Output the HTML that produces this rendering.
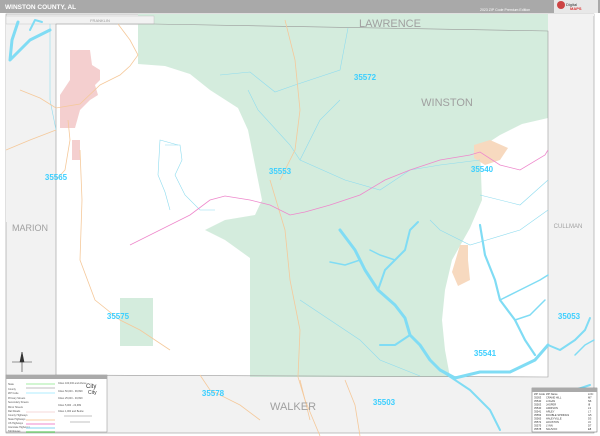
<!DOCTYPE html>
<html><head><meta charset="utf-8"><style>
html,body{margin:0;padding:0;width:600px;height:436px;overflow:hidden;background:#fff;font-family:"Liberation Sans",sans-serif}
</style></head><body>
<svg width="600" height="436" viewBox="0 0 600 436" xmlns="http://www.w3.org/2000/svg" font-family="Liberation Sans, sans-serif">
<rect x="0" y="0" width="600" height="436" fill="#fff"/>
<rect x="0" y="0" width="600" height="13" fill="#a9a9a9"/>
<text x="5" y="9" font-size="6.5" font-weight="bold" fill="#fff">WINSTON COUNTY, AL</text>
<text x="480" y="11" font-size="3.5" fill="#fff">2023 ZIP Code Premium Edition</text>
<rect x="554" y="0" width="44" height="13" fill="#e8e8e8"/>
<circle cx="561" cy="5" r="4" fill="#c44"/><text x="566" y="6" font-size="4" fill="#333">Digital</text><text x="570" y="10" font-size="4" fill="#d33" font-weight="bold">MAPS</text>
<!-- frame -->
<rect x="6" y="14" width="588" height="419" fill="#f2f2f2" stroke="#999" stroke-width="0.6"/>
<!-- county interior white -->
<polygon points="56,24 548,31 548,377 56,375" fill="#fff"/>
<!-- top-left white area -->
<rect x="6" y="22" width="50" height="200" fill="#f2f2f2"/>
<!-- green -->
<polygon points="138,14 594,14 594,16 548,16 548,118 522,124 500,135 480,148 482,200 470,228 452,260 445,290 442,320 445,350 450,377 250,377 250,258 225,240 205,230 225,220 255,215 262,200 256,170 248,130 238,108 210,90 190,74 165,66 138,64" fill="#d4ecdd"/>
<polygon points="548,16 594,16 594,14 548,14" fill="#f2f2f2"/>
<!-- Franklin strip -->
<rect x="6" y="16" width="148" height="8" fill="#f2f2f2" stroke="#bbb" stroke-width="0.4"/>
<text x="100" y="22" font-size="4" fill="#999" text-anchor="middle">FRANKLIN</text>
<!-- county boundary lines -->
<polyline points="154,24 548,31 548,377 56,375 56,24 154,24" fill="none" stroke="#999" stroke-width="0.6"/>
<!-- box in 35575 -->
<rect x="120" y="298" width="33" height="48" fill="#d4ecdd"/>
<!-- cities -->
<path d="M70,50 L90,50 L92,65 L100,70 L100,80 L95,85 L98,95 L90,100 L80,110 L75,128 L60,128 L60,95 L70,80 Z" fill="#f4cfcf"/>
<path d="M72,140 L80,140 L80,160 L72,160 Z" fill="#f4cfcf"/>
<path d="M474,145 L490,140 L508,148 L500,160 L485,165 L474,158 Z" fill="#f7d9bf"/>
<path d="M460,245 L468,245 L468,260 L470,280 L458,286 L452,272 L455,262 Z" fill="#f7d9bf"/>
<!-- zip boundaries -->
<g fill="none" stroke="#8fdcef" stroke-width="0.6">
<polyline points="220,75 250,72 275,92 295,85 340,70 348,28"/>
<polyline points="248,90 258,110 290,145 300,160 345,180 380,190 410,170 440,165 480,160"/>
<polyline points="300,160 320,120 340,100"/>
<polyline points="165,145 180,145 182,160 175,175 185,195 200,210 215,210"/>
<polyline points="178,145 160,140 158,175 165,192 170,210"/>
<polyline points="430,220 440,230 470,245 520,230 548,210"/>
<polyline points="300,300 330,320 360,340 380,360 420,376"/>
<polyline points="480,195 520,205 548,180"/>
<polyline points="50,24 50,100 56,130"/>
</g>
<!-- roads -->
<g fill="none" stroke-width="0.8">
<polyline points="20,90 40,98 56,108 80,104 100,85 120,75 130,66 138,55 130,40 118,24" stroke="#f5c99b"/>
<polyline points="56,180 65,170 70,140 68,120" stroke="#f5c99b"/>
<polyline points="6,150 30,140 56,130" stroke="#f5c99b"/>
<polyline points="80,150 82,200 80,260 95,300 120,320 140,330 170,350" stroke="#f5c99b"/>
<polyline points="270,180 285,230 290,280 300,330 298,377 305,400 320,436" stroke="#f5c99b"/>
<polyline points="285,20 295,60 300,110 295,150 280,180" stroke="#f5c99b"/>
<polyline points="200,375 210,390 240,405 260,420" stroke="#f5c99b"/>
<polyline points="345,380 355,405 360,436" stroke="#f5c99b"/>
<polyline points="300,380 310,420" stroke="#f5c99b"/>
<polyline points="130,245 160,230 190,215 210,200 225,196 250,200 270,205 290,215 305,212 330,205 360,195 385,180 410,170 440,160 470,155 480,152 500,165 520,170 545,155 548,150" stroke="#ee88cc"/>
</g>
<!-- lakes -->
<g fill="none" stroke="#80dcf4" stroke-linecap="round" stroke-linejoin="round">
<polyline points="18,22 12,40 10,60 20,50 30,40 40,35 50,30" stroke-width="3"/>
<polyline points="30,30 35,20 42,22" stroke-width="2"/>
<polyline points="340,230 355,250 365,270 378,290 395,305 405,318 410,335 420,345 430,360 440,370 455,378 480,372 510,372 535,360 548,345" stroke-width="3"/>
<polyline points="378,290 385,270 395,260 405,250 410,230 418,222" stroke-width="2"/>
<polyline points="395,260 380,255 370,250" stroke-width="1.5"/>
<polyline points="360,260 345,265 330,262" stroke-width="1.5"/>
<polyline points="410,335 395,345 380,345" stroke-width="2"/>
<polyline points="480,225 485,255 495,280 500,300 515,320 525,340 535,355" stroke-width="2.2"/>
<polyline points="500,300 520,290 540,280 548,275" stroke-width="1.5"/>
<polyline points="515,320 530,315 545,300" stroke-width="1.5"/>
<polyline points="548,345 560,350 575,340 585,330 590,318" stroke-width="2"/>
<polyline points="440,370 470,390 490,410 500,430" stroke-width="2"/>
<polyline points="560,400 575,390 590,385" stroke-width="2"/>
<polyline points="575,355 585,345 594,340" stroke-width="1.5"/>
</g>
<!-- labels -->
<g font-size="11" fill="#a0a0a0" text-anchor="middle">
<text x="390" y="27">LAWRENCE</text>
<text x="447" y="106">WINSTON</text>
<text x="30" y="231" font-size="9">MARION</text>
<text x="293" y="410">WALKER</text>
<text x="568" y="228" font-size="6">CULLMAN</text>
</g>
<g font-size="8" fill="#3ccfff" font-weight="bold" text-anchor="middle">
<text x="365" y="80">35572</text>
<text x="280" y="174">35553</text>
<text x="482" y="172">35540</text>
<text x="56" y="180">35565</text>
<text x="118" y="319">35575</text>
<text x="485" y="356">35541</text>
<text x="569" y="319">35053</text>
<text x="213" y="396">35578</text>
<text x="384" y="405">35503</text>
</g>
<!-- compass -->
<g stroke="#333" stroke-width="0.6" fill="#333"><line x1="22" y1="352" x2="22" y2="372"/><line x1="12" y1="362" x2="32" y2="362"/><polygon points="22,352 20,362 24,362"/></g>
<!-- legend -->
<rect x="6" y="375" width="101" height="57" fill="#fff" stroke="#888" stroke-width="0.5"/>
<rect x="6" y="375" width="101" height="4" fill="#aaa"/>
<g font-size="2.5" fill="#555">
<text x="8" y="385">State</text><text x="8" y="390">County</text><text x="8" y="394">ZIP Code</text><text x="8" y="399">Primary Streets</text><text x="8" y="403">Secondary Streets</text><text x="8" y="408">Minor Streets</text><text x="8" y="412">Rail Roads</text><text x="8" y="416">County Highways</text><text x="8" y="420">State Highways</text><text x="8" y="424">US Highways</text><text x="8" y="428">Interstate Highways</text><text x="8" y="432">Toll Routes</text>
<text x="58" y="384">Cities 100,000 and Above</text><text x="58" y="392">Cities 50,000 - 99,999</text><text x="58" y="399">Cities 25,000 - 49,999</text><text x="58" y="406">Cities 5,000 - 24,999</text><text x="58" y="412">Cities 1,000 and Below</text>
</g>
<text x="86" y="388" font-size="6" fill="#333">City</text><text x="88" y="394" font-size="5" fill="#333">City</text>
<g stroke-width="1.2"><line x1="26" y1="384" x2="55" y2="384" stroke="#b6f0b6"/><line x1="26" y1="388" x2="55" y2="388" stroke="#ccc"/><line x1="26" y1="393" x2="55" y2="393" stroke="#bff0ff"/><line x1="26" y1="412" x2="55" y2="412" stroke="#f6e0e0"/><line x1="26" y1="420" x2="55" y2="420" stroke="#fad8b5"/><line x1="26" y1="424" x2="55" y2="424" stroke="#f2a0d8"/><line x1="26" y1="428" x2="55" y2="428" stroke="#9fdcf4"/><line x1="26" y1="432" x2="55" y2="432" stroke="#6c6"/></g>
<line x1="64" y1="416" x2="92" y2="416" stroke="#666" stroke-width="0.4"/>
<line x1="70" y1="422" x2="90" y2="422" stroke="#666" stroke-width="0.4"/>
<!-- zip index -->
<rect x="532" y="388" width="65" height="44" fill="#fff" stroke="#666" stroke-width="0.5"/>
<rect x="532" y="388" width="65" height="4" fill="#aaa"/>
<g font-size="2.6" fill="#333">
<text x="534" y="395">ZIP Code</text><text x="546" y="395">ZIP Name</text><text x="588" y="395">LOC</text>
<text x="534" y="398.5">35053</text><text x="546" y="398.5">CRANE HILL</text><text x="588" y="398.5">M7</text>
<text x="534" y="402">35540</text><text x="546" y="402">LOGAN</text><text x="588" y="402">N6</text>
<text x="534" y="405.5">35503</text><text x="546" y="405.5">JASPER</text><text x="588" y="405.5">I8</text>
<text x="534" y="409">35540</text><text x="546" y="409">ADDISON</text><text x="588" y="409">L3</text>
<text x="534" y="412.5">35541</text><text x="546" y="412.5">ARLEY</text><text x="588" y="412.5">L7</text>
<text x="534" y="416">35553</text><text x="546" y="416">DOUBLE SPRINGS</text><text x="588" y="416">G5</text>
<text x="534" y="419.5">35565</text><text x="546" y="419.5">HALEYVILLE</text><text x="588" y="419.5">D3</text>
<text x="534" y="423">35572</text><text x="546" y="423">HOUSTON</text><text x="588" y="423">J4</text>
<text x="534" y="426.5">35575</text><text x="546" y="426.5">LYNN</text><text x="588" y="426.5">D7</text>
<text x="534" y="430">35578</text><text x="546" y="430">NAUVOO</text><text x="588" y="430">E8</text>
</g>
</svg>
</body></html>
